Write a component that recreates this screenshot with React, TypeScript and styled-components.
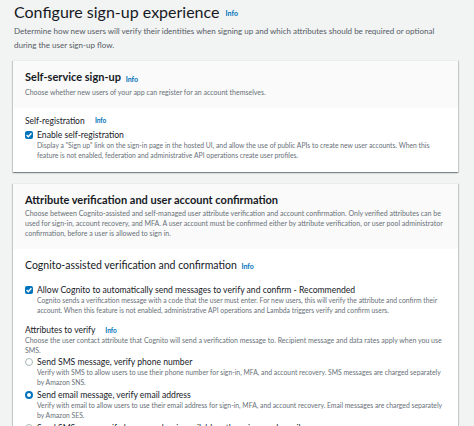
import styled, {createGlobalStyle} from 'styled-components';

const GlobalStyle = createGlobalStyle`
	html, body {
		margin: 0;
		padding: 0;
		background: #f2f3f3;
		font-family: Lato, 'Open Sans', sans-serif;
		color: #16191f;
	}
`;

function Checkbox() {
	return (
		<CheckBox>
			<svg width="8" height="8" viewBox="0 0 8 8">
				<path d="M1.6 4.1 L3.3 5.7 L6.4 2.3" fill="none" stroke="#fff" strokeWidth="1.4" />
			</svg>
		</CheckBox>
	);
}

interface OptionProps {
	label: string;
	desc?: string;
	kind: 'check' | 'radio';
	checked?: boolean;
}

function Option(props: OptionProps) {
	return (
		<OptionBlock>
			<OptionRow>
				{props.kind === 'check' ? <Checkbox /> : <Radio $checked={!!props.checked} />}
				<OptionLabel>{props.label}</OptionLabel>
			</OptionRow>
			{props.desc && <OptionDesc>{props.desc}</OptionDesc>}
		</OptionBlock>
	);
}

export default function App() {
	return (
		<>
			<GlobalStyle />
			<Page>
				<Title>
					Configure sign-up experience <Info $size="7px">Info</Info>
				</Title>
				<Lead>
					Determine how new users will verify their identities when signing up and which attributes should be
					required or optional during the user sign-up flow.
				</Lead>

				<Card>
					<CardHeader>
						<CardTitle>
							Self-service sign-up <Info $size="7px">Info</Info>
						</CardTitle>
						<CardDesc>Choose whether new users of your app can register for an account themselves.</CardDesc>
					</CardHeader>
					<CardBody>
						<FieldLabel>
							Self-registration <Info $size="6.5px">Info</Info>
						</FieldLabel>
						<Option
							kind="check"
							label="Enable self-registration"
							desc={'Display a "Sign up" link on the sign-in page in the hosted UI, and allow the use of public APIs to create new user accounts. When this feature is not enabled, federation and administrative API operations create user profiles.'}
						/>
					</CardBody>
				</Card>

				<Card>
					<CardHeader>
						<CardTitle>Attribute verification and user account confirmation</CardTitle>
						<CardDesc>
							Choose between Cognito-assisted and self-managed user attribute verification and account
							confirmation. Only verified attributes can be used for sign-in, account recovery, and MFA. A user
							account must be confirmed either by attribute verification, or user pool administrator
							confirmation, before a user is allowed to sign in.
						</CardDesc>
					</CardHeader>
					<CardBody>
						<SubHeading>
							Cognito-assisted verification and confirmation <Info $size="7px">Info</Info>
						</SubHeading>
						<Option
							kind="check"
							label="Allow Cognito to automatically send messages to verify and confirm - Recommended"
							desc="Cognito sends a verification message with a code that the user must enter. For new users, this will verify the attribute and confirm their account. When this feature is not enabled, administrative API operations and Lambda triggers verify and confirm users."
						/>
						<FieldLabel $tight>
							Attributes to verify <Info $size="6.5px">Info</Info>
						</FieldLabel>
						<FieldDesc>
							Choose the user contact attribute that Cognito will send a verification message to. Recipient
							message and data rates apply when you use SMS.
						</FieldDesc>
						<RadioGroup>
							<Option
								kind="radio"
								label="Send SMS message, verify phone number"
								desc="Verify with SMS to allow users to use their phone number for sign-in, MFA, and account recovery. SMS messages are charged separately by Amazon SNS."
							/>
							<Option
								kind="radio"
								checked
								label="Send email message, verify email address"
								desc="Verify with email to allow users to use their email address for sign-in, MFA, and account recovery. Email messages are charged separately by Amazon SES."
							/>
							<Option
								kind="radio"
								label="Send SMS message if phone number is available, otherwise send email message"
								desc="Verify with SMS when a phone number is available, otherwise fall back to email."
							/>
						</RadioGroup>
					</CardBody>
				</Card>
			</Page>
		</>
	);
}

const Page = styled.div`
	width: 445px;
	padding: 1px 0 0 13px;
	display: flex;
	flex-direction: column;
`;

const Title = styled.h1`
	margin: 0 0 0 1px;
	font-size: 16px;
	font-weight: 400;
	line-height: 21px;
	color: #16191f;
	white-space: nowrap;
`;

const Info = styled.span<{$size: string}>`
	font-size: ${(p) => p.$size};
	font-weight: 700;
	color: #0073bb;
	margin-left: 2px;
	vertical-align: middle;
`;

const Lead = styled.p`
	margin: 0 0 8px 1px;
	font-size: 8px;
	line-height: 14px;
	color: #545b64;
`;

const Card = styled.section`
	background: #fff;
	border-top: 1px solid #eaeded;
	box-shadow: 0 1px 1px 0 rgba(0, 28, 36, 0.3), 1px 1px 1px 0 rgba(0, 28, 36, 0.15),
		-1px 1px 1px 0 rgba(0, 28, 36, 0.15);
	margin-bottom: 11px;
`;

const CardHeader = styled.div`
	background: #fafafa;
	padding: 9px 11px 11px 12px;
`;

const CardTitle = styled.h2`
	margin: 0;
	font-size: 11px;
	font-weight: 700;
	line-height: 14px;
	color: #16191f;
`;

const CardDesc = styled.p`
	margin: 1px 0 0;
	font-size: 7px;
	line-height: 10px;
	color: #687078;
`;

const CardBody = styled.div`
	padding: 6px 11px 11px 12px;
	display: flex;
	flex-direction: column;
`;

const FieldLabel = styled.div<{$tight?: boolean}>`
	font-size: 8.5px;
	line-height: ${(p) => (p.$tight ? '10px' : '14px')};
	margin: ${(p) => (p.$tight ? '10px 0 0' : '0 0 1px')};
	color: #16191f;

	${Info} {
		margin-left: 8px;
	}
`;

const FieldDesc = styled.p`
	margin: 0;
	font-size: 7px;
	line-height: 9.5px;
	color: #687078;
`;

const SubHeading = styled.h3`
	margin: 3px 0 11px;
	font-size: 10.5px;
	font-weight: 400;
	line-height: 14px;
	color: #16191f;
`;

const OptionBlock = styled.div`
	display: flex;
	flex-direction: column;
`;

const OptionRow = styled.div`
	display: flex;
	align-items: center;
	gap: 4px;
	height: 12px;
`;

const OptionLabel = styled.span`
	font-size: 8.6px;
	line-height: 12px;
	color: #16191f;
	white-space: nowrap;
`;

const OptionDesc = styled.p`
	margin: 0 0 0 12px;
	font-size: 6.8px;
	line-height: 9.6px;
	color: #687078;
`;

const CheckBox = styled.span`
	width: 8px;
	height: 8px;
	border-radius: 2px;
	background: #0073bb;
	display: inline-flex;
	flex-shrink: 0;
`;

const Radio = styled.span<{$checked: boolean}>`
	box-sizing: border-box;
	width: 8px;
	height: 8px;
	border-radius: 50%;
	background: #fff;
	flex-shrink: 0;
	border: ${(p) => (p.$checked ? '2.5px solid #0073bb' : '1px solid #aab7b8')};
`;

const RadioGroup = styled.div`
	display: flex;
	flex-direction: column;
	gap: 2px;
	margin-top: 1px;
`;
